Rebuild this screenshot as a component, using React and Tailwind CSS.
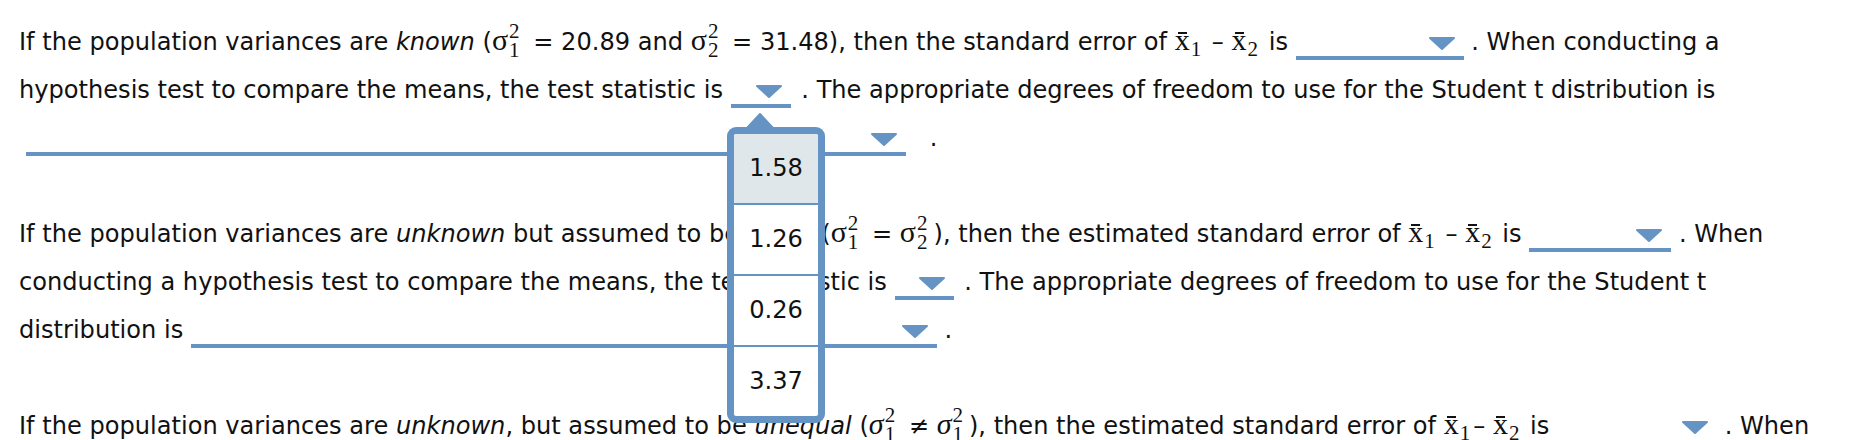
import React from "react";

function Tri() {
  return (
    <svg width="28" height="15" viewBox="0 0 28 15" className="block">
      <path d="M2 2 H26 L14 13 Z" fill="#6594c4" stroke="#6594c4" strokeWidth="2" strokeLinejoin="round" />
    </svg>
  );
}

function DD({ className = "" }) {
  return (
    <span className={"inline-block overflow-hidden align-[-10px] h-[30px] border-b-[4px] border-[#6594c4] " + className}>
      <span className="flex h-full items-center justify-end pr-[8px]">
        <Tri />
      </span>
    </span>
  );
}

function Sig({ sup = "2", sub = "1", italic = false }) {
  return (
    <span className="whitespace-nowrap">
      <span className={"font-['Liberation_Serif',serif] text-[30px] leading-none " + (italic ? "italic" : "")}>σ</span>
      <span className="inline-flex flex-col align-[12px] font-['Liberation_Serif',serif] text-[21px] leading-[19px] ml-[1px] mr-[6px] not-italic">
        <span>{sup}</span>
        <span>{sub}</span>
      </span>
    </span>
  );
}

function XBar({ sub }) {
  return (
    <span className="whitespace-nowrap font-['Liberation_Serif',serif]">
      <span className="relative inline-block text-[30px] leading-none">
        x
        <span className="absolute left-[3px] right-[3px] top-[7px] h-[1.5px] bg-[#111]" />
      </span>
      <span className="text-[21px] leading-none align-[-6px] ml-[1px] mr-[3px]">{sub}</span>
    </span>
  );
}

function Line({ children, className = "" }) {
  return <div className={"h-[48px] leading-[48px] whitespace-nowrap " + className}>{children}</div>;
}

export default function App() {
  return (
    <div className="relative w-[1852px] h-[440px] overflow-hidden bg-white text-[#111] text-[24.1px] font-['DejaVu_Sans',sans-serif]">
      <div className="pl-[19px] pt-[18px]">
        <Line>
          If the population variances are <i>known</i> (<Sig sup="2" sub="1" /> = 20.89 and <Sig sup="2" sub="2" /> = 31.48), then the standard error of <XBar sub="1" /> – <XBar sub="2" /> is <DD className="w-[168px]" /> . When conducting a
        </Line>
        <Line>
          hypothesis test to compare the means, the test statistic is <DD className="w-[60px] mr-[3px]" /> . The appropriate degrees of freedom to use for the Student t distribution is
        </Line>
        <Line>
          <DD className="w-[880px] ml-[7px]" /> <span className="ml-[16px]">.</span>
        </Line>

        <Line className="mt-[48px]">
          If the population variances are <i>unknown</i> but assumed to be <i>equal</i> (<Sig sup="2" sub="1" /> = <Sig sup="2" sub="2" />), then the estimated standard error of <XBar sub="1" /> – <XBar sub="2" /> is <DD className="w-[142px]" /> . When
        </Line>
        <Line>
          conducting a hypothesis test to compare the means, the test statistic is <DD className="w-[59px] mr-[3px]" /> . The appropriate degrees of freedom to use for the Student t
        </Line>
        <Line>
          distribution is <DD className="w-[746px]" /> .
        </Line>

        <Line className="mt-[48px]">
          If the population variances are <i>unknown</i>, but assumed to be <i>unequal</i> (<Sig sup="2" sub="1" italic /> ≠ <Sig sup="2" sub="1" italic />), then the estimated standard error of <XBar sub="1" />– <XBar sub="2" /> is <DD className="w-[160px]" /> . When
        </Line>
      </div>

      <div className="absolute left-[727px] top-[112px] w-[98px] flex flex-col">
        <svg width="28" height="16" viewBox="0 0 28 16" className="block ml-[19px] -mb-[1px]">
          <path d="M1 16 L14 2 L27 16 Z" fill="#6594c4" stroke="#6594c4" strokeWidth="2" strokeLinejoin="round" />
        </svg>
        <div className="w-[98px] h-[296px] border-[7px] border-[#6594c4] rounded-[9px] bg-white flex flex-col overflow-hidden">
          <div className="h-[69px] flex items-center justify-center bg-[#e0e7ea]">1.58</div>
          <div className="h-[71px] flex items-center justify-center border-t-2 border-[#6594c4]">1.26</div>
          <div className="h-[71px] flex items-center justify-center border-t-2 border-[#6594c4]">0.26</div>
          <div className="flex-1 flex items-center justify-center border-t-2 border-[#6594c4]">3.37</div>
        </div>
      </div>
    </div>
  );
}
